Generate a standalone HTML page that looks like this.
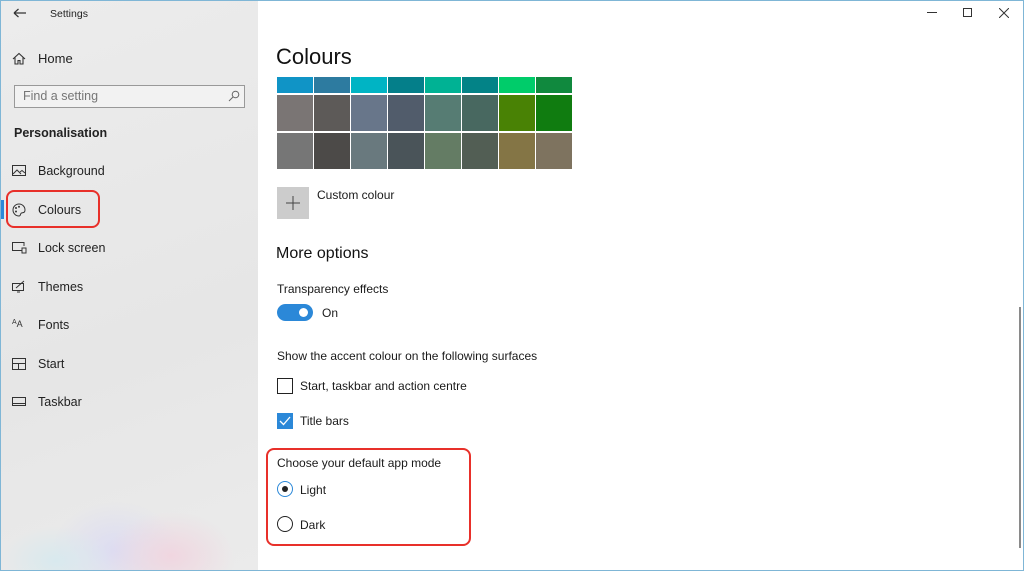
<!DOCTYPE html>
<html style="overflow:hidden"><head><style>
*{margin:0;padding:0;box-sizing:border-box}
html,body{width:1024px;height:571px;overflow:hidden}
body{font-family:"Liberation Sans",sans-serif;color:#1a1a1a;position:relative;background:#fff}
.win{position:absolute;left:0;top:0;width:1024px;height:571px;border:1px solid #7fb6d6}
.side{position:absolute;left:1px;top:1px;width:257px;height:569px;background:linear-gradient(160deg,#ececec,#e6e6e6 60%,#ebebeb);overflow:hidden}
.blob1{position:absolute;left:50px;top:500px;width:130px;height:100px;border-radius:50%;background:radial-gradient(#dcdcf2,rgba(220,220,245,0) 70%)}
.blob2{position:absolute;left:105px;top:510px;width:130px;height:90px;border-radius:50%;background:radial-gradient(#f0d6e0,rgba(243,208,222,0) 70%)}
.blob3{position:absolute;left:0px;top:525px;width:110px;height:70px;border-radius:50%;background:radial-gradient(#d8e9ee,rgba(211,233,240,0) 70%)}
.t{position:absolute;white-space:nowrap}
.nav{position:absolute;left:38px;font-size:12.5px;color:#222}
.ic{position:absolute;left:12px}
.sw{position:absolute;width:36px}
.red{position:absolute;border:2.5px solid #e8302a;border-radius:8px}
</style></head><body>
<div class="side">
<div class="blob1"></div><div class="blob2"></div><div class="blob3"></div>
</div>
<div class="win"></div>
<svg class="t" style="left:13px;top:8px" width="14" height="10"><path d="M1 5H13M1 5L5.5 1M1 5L5.5 9" stroke="#333" stroke-width="1.2" fill="none"/></svg>
<div class="t" style="left:50px;top:8px;font-size:10.5px;color:#222">Settings</div>
<div class="t" style="left:927px;top:12px;width:10px;height:1px;background:#333"></div>
<div class="t" style="left:963px;top:8px;width:9px;height:9px;border:1px solid #333"></div>
<svg class="t" style="left:999px;top:8px" width="10" height="10"><path d="M0 0L10 10M10 0L0 10" stroke="#333" stroke-width="1"/></svg>
<svg class="ic" style="top:52px" width="14" height="13"><path d="M1 7L7 1.5L13 7M3 5.5V12H6V8.5H8V12H11V5.5" stroke="#333" fill="none" stroke-width="1.1"/></svg>
<div class="nav" style="top:51px;font-size:13px">Home</div>
<div class="t" style="left:14px;top:85px;width:231px;height:23px;border:1.5px solid #999;background:#f2f2f2"></div>
<div class="t" style="left:23px;top:89px;font-size:12.5px;color:#767676">Find a setting</div>
<svg class="t" style="left:228px;top:90px" width="12" height="12"><circle cx="7.5" cy="4.5" r="3.3" stroke="#666" fill="none"/><path d="M5 7L1 11" stroke="#666"/></svg>
<div class="t" style="left:14px;top:126px;font-size:12.5px;font-weight:bold;color:#222">Personalisation</div>
<svg class="ic" style="top:165px" width="14" height="12"><rect x=".5" y=".5" width="13" height="10" stroke="#333" fill="none"/><path d="M1 9L5 5L9 9M8 7L10 5.5L13 8" stroke="#333" fill="none"/></svg>
<div class="nav" style="top:164px">Background</div>
<div class="t" style="left:1px;top:200px;width:3px;height:19px;background:#2b88d8"></div>
<svg class="ic" style="top:203px" width="14" height="14"><path d="M7 1A6 6 0 1 0 7 13C9 13 8 10.5 9.5 10S13 10 13 7A6 6 0 0 0 7 1Z" stroke="#333" fill="none"/><circle cx="4" cy="5" r="1" fill="#333"/><circle cx="7" cy="3.8" r="1" fill="#333"/><circle cx="4" cy="8.5" r="1" fill="#333"/></svg>
<div class="nav" style="top:203px">Colours</div>
<div class="red" style="left:6px;top:190px;width:94px;height:38px"></div>
<svg class="ic" style="top:242px" width="15" height="12"><path d="M10 8.5H.5V.5H12V4" stroke="#333" fill="none"/><rect x="10" y="6" width="4" height="5" stroke="#333" fill="none"/></svg>
<div class="nav" style="top:241px">Lock screen</div>
<svg class="ic" style="top:280px" width="15" height="13"><rect x=".5" y="3.5" width="11" height="7" stroke="#333" fill="none"/><path d="M4 8L12 1M5 12H8" stroke="#333"/></svg>
<div class="nav" style="top:280px">Themes</div>
<div class="t" style="left:12px;top:319px;font-size:9px;color:#333"><span style="font-size:7px;vertical-align:3px">A</span>A</div>
<div class="nav" style="top:318px">Fonts</div>
<svg class="ic" style="top:358px" width="14" height="12"><rect x=".5" y=".5" width="13" height="5" stroke="#333" fill="none"/><rect x=".5" y="5.5" width="6" height="6" stroke="#333" fill="none"/><rect x="6.5" y="5.5" width="7" height="6" stroke="#333" fill="none"/></svg>
<div class="nav" style="top:357px">Start</div>
<svg class="ic" style="top:397px" width="14" height="10"><rect x=".5" y=".5" width="13" height="8" stroke="#333" fill="none"/><path d="M1 6.5H13" stroke="#333"/></svg>
<div class="nav" style="top:395px">Taskbar</div>
<div class="t" style="left:276px;top:44px;font-size:22px;color:#111">Colours</div>
<div id="g"></div>
<div class="t" style="left:277px;top:187px;width:32px;height:32px;background:#ccc"></div>
<svg class="t" style="left:286px;top:196px" width="14" height="14"><path d="M7 0V14M0 7H14" stroke="#444" stroke-width="1"/></svg>
<div class="t" style="left:317px;top:188px;font-size:12px">Custom colour</div>
<div class="t" style="left:276px;top:245px;font-size:16px;color:#111">More options</div>
<div class="t" style="left:277px;top:282px;font-size:12px">Transparency effects</div>
<div class="t" style="left:277px;top:304px;width:36px;height:17px;border-radius:9px;background:#2b88d8"></div>
<div class="t" style="left:299px;top:308px;width:9px;height:9px;border-radius:50%;background:#fff"></div>
<div class="t" style="left:322px;top:306px;font-size:12px">On</div>
<div class="t" style="left:277px;top:349px;font-size:12px">Show the accent colour on the following surfaces</div>
<div class="t" style="left:277px;top:378px;width:16px;height:16px;border:1.5px solid #222"></div>
<div class="t" style="left:300px;top:379px;font-size:12px">Start, taskbar and action centre</div>
<div class="t" style="left:277px;top:413px;width:16px;height:16px;background:#2b88d8"></div>
<svg class="t" style="left:279px;top:415px" width="12" height="12"><path d="M1 6L4.5 9.5L11 2" stroke="#fff" stroke-width="1.3" fill="none"/></svg>
<div class="t" style="left:300px;top:414px;font-size:12px">Title bars</div>
<div class="t" style="left:277px;top:456px;font-size:12px">Choose your default app mode</div>
<div class="t" style="left:277px;top:481px;width:16px;height:16px;border-radius:50%;border:1.5px solid #2b88d8"></div>
<div class="t" style="left:282px;top:486px;width:6px;height:6px;border-radius:50%;background:#222"></div>
<div class="t" style="left:300px;top:483px;font-size:12px">Light</div>
<div class="t" style="left:277px;top:516px;width:16px;height:16px;border-radius:50%;border:1.5px solid #222"></div>
<div class="t" style="left:300px;top:518px;font-size:12px">Dark</div>
<div class="red" style="left:266px;top:448px;width:205px;height:98px"></div>
<div class="t" style="left:1019px;top:307px;width:2px;height:241px;background:#8a8a8a"></div>
<script>
var r=[["#1094c6","#2d7ba0","#00b4c4","#047f8a","#00b294","#038387","#00cc6a","#10893e"],["#7a7574","#5d5a58","#68768a","#515c6b","#567c73","#486860","#498205","#107c10"],["#767676","#4c4a48","#69797e","#4a5459","#647c64","#525e54","#847545","#7e735f"]];
var ys=[[77,16],[95,36],[133,36]],h="";
for(var i=0;i<3;i++)for(var j=0;j<8;j++)h+='<div class="sw" style="left:'+(277+j*37)+'px;top:'+ys[i][0]+'px;height:'+ys[i][1]+'px;background:'+r[i][j]+'"></div>';
document.getElementById("g").innerHTML=h;
</script>
</body></html>
